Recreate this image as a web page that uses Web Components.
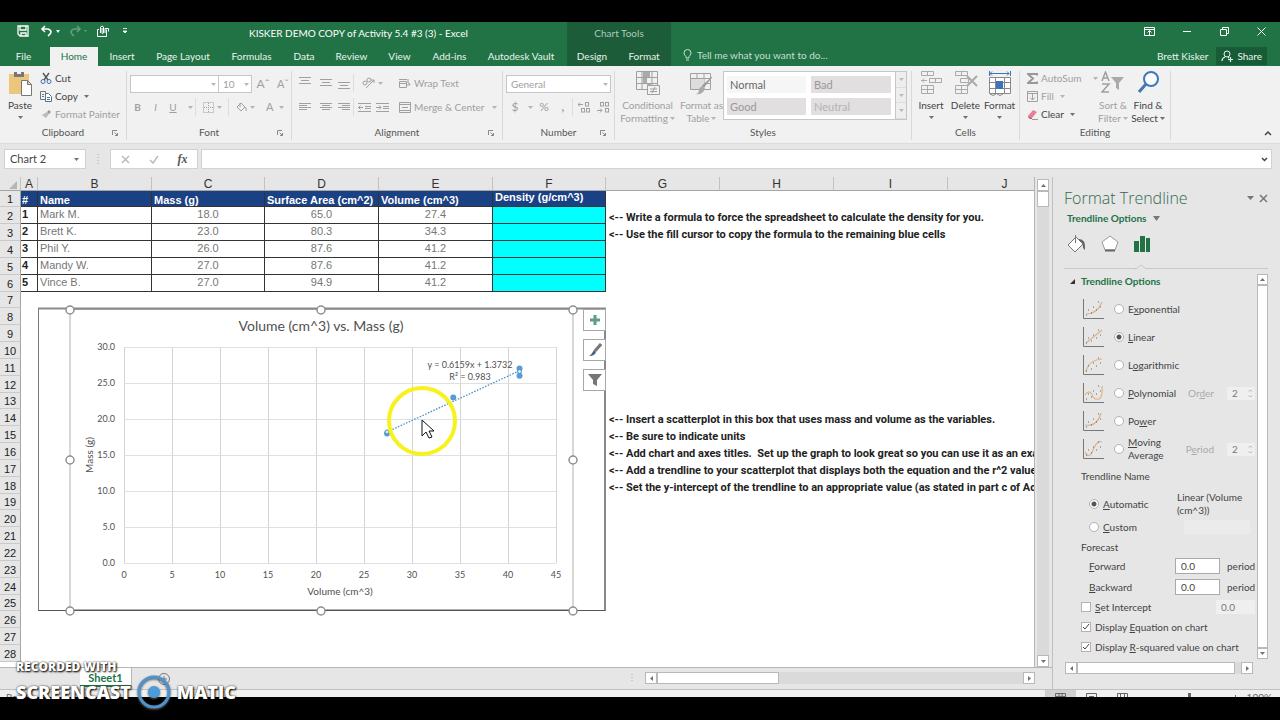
<!DOCTYPE html>
<html lang="en">
<head>
<meta charset="utf-8">
<title>KISKER DEMO COPY of Activity 5.4 #3 (3) - Excel</title>
<style>
html,body{margin:0;background:#000}
body{font:10px/14px Lato,"Open Sans",sans-serif;color:#444}
</style>
</head>
<body>
<xl-app></xl-app>
<script>
const BASE = `<style>
*{box-sizing:border-box}
:host{display:block;box-sizing:border-box}
button,input,select{font:inherit;color:inherit;background:none;border:0;border-radius:0;padding:0;margin:0}
button{white-space:nowrap;cursor:pointer}
a{color:inherit;text-decoration:none}
svg{display:block;flex:none}
</style>`;
function define(name, html, setup){
  const t = document.createElement('template');
  t.innerHTML = BASE + html;
  customElements.define(name, class extends HTMLElement{
    constructor(){
      super();
      this.attachShadow({mode:'open'});
    }
    connectedCallback(){
      if(this.shadowRoot.childNodes.length) return;
      this.shadowRoot.append(t.content.cloneNode(true));
      if(setup) setup(this, this.shadowRoot);
    }
  });
}
const icon = (w,h,body,extra='') => `<svg width="${w}" height="${h}" viewBox="0 0 ${w} ${h}" fill="none" stroke="currentColor" aria-hidden="true" ${extra}>${body}</svg>`;
const arrow = icon(5,3,'<path d="M0 0h5L2.500 3z" fill="currentColor" stroke="none" opacity=".75"/>','class="ar"');

/* ---------- title bar ---------- */
define('xl-title-bar', `<style>
:host{background:#217346;color:#fff;height:22px}
.bar{display:grid;grid-template-columns:1fr 1fr;height:22px;position:relative}
.quick{display:flex;align-items:center;padding-left:17px;gap:9px;height:18px}
.quick .more{margin-left:3px}
.win{display:flex;justify-content:flex-end;align-items:center;gap:28px;padding-right:14px;height:18px}
.name{position:absolute;left:249px;top:4px;white-space:nowrap}
.tools{position:absolute;left:567px;top:0;width:104px;height:22px;background:#1c5c38;color:#a9cdb8;text-align:center;line-height:22px}
.dim{opacity:.3}
button{display:block}
</style>
<div class="bar">
 <div class="quick">
  <button aria-label="Save">${icon(12,12,'<path d="M1 1h10v10H3L1 9zM3 1v4h6V1M4 11V8h5v3" stroke-width="1.300"/>')}</button>
  <button aria-label="Undo" style="margin-left:2px">${icon(20,12,'<path d="M5 1L2 4l3 3M2 4h6q3 1 3 3t-3 4" stroke-width="1.600"/><path d="M16 5h4l-2 3z" fill="#fff" stroke="none"/>')}</button>
  <button class="dim" aria-label="Redo">${icon(18,12,'<path d="M8 1l3 3-3 3M11 4H5Q2 5 2 7t3 4" stroke-width="1.600"/><path d="M15 5h3l-1.500 2z" fill="#fff" stroke="none"/>')}</button>
  <button aria-label="Touch mode">${icon(14,13,'<path d="M3 4.500H1.500v7h9v-7M4.500 8V2q1.500-2 3 0v6q-1 1.500-1.500 0V3M9 3.500h3.500v3M9 3.500V8"/>')}</button>
  <button class="more" aria-label="Customize">${icon(6,6,'<path d="M1 .500h4M1 3h4L3 5z" fill="#fff" stroke-width=".8"/>')}</button>
 </div>
 <div class="win">
  <button aria-label="Ribbon options">${icon(11,9,'<path d="M.500 .500h10v8H.500zM.500 2.500h10M5.500 8V4M3.500 5.500l2-2 2 2"/>')}</button>
  <button aria-label="Minimize">${icon(9,9,'<path d="M0 4.500h8"/>')}</button>
  <button aria-label="Restore">${icon(9,9,'<path d="M.500 2.500h6v6h-6zM2.500 2V.500h6v6H7"/>')}</button>
  <button aria-label="Close">${icon(9,9,'<path d="M.500 .500l8 8M8.500 .500l-8 8"/>')}</button>
 </div>
 <div class="tools">Chart Tools</div>
 <div class="name">KISKER DEMO COPY of Activity 5.4 #3 (3) - Excel</div>
</div>`);

/* ---------- ribbon tabs ---------- */
define('xl-tabs', `<style>
:host{background:#217346;color:#e9f3ed}
nav{display:flex;height:22px;align-items:stretch;white-space:nowrap}
a{display:block;text-align:center;line-height:24px}
.home{background:#f1f1f1;color:#217346;margin-top:3px;line-height:18px}
.ctx{background:#1c5c38}
.tell{display:flex;align-items:center;gap:5px;padding-left:12px;flex:1;color:#c5dfd0}
.user{line-height:24px;padding-right:8px}
.share{display:flex;align-items:center;gap:4px;background:#185c37;height:18px;margin:3px 13px 0 0;padding:0 5px}
</style>
<nav>
 <a href="#" style="width:50px;padding-right:3px">File</a><a href="#" class="home" style="width:48px">Home</a><a href="#" style="width:48px">Insert</a><a href="#" style="width:74px">Page Layout</a><a href="#" style="width:63px">Formulas</a><a href="#" style="width:42px">Data</a><a href="#" style="width:53px">Review</a><a href="#" style="width:43px">View</a><a href="#" style="width:57px">Add-ins</a><a href="#" style="width:89px;padding-right:3px">Autodesk Vault</a><a href="#" class="ctx" style="width:50px">Design</a><a href="#" class="ctx" style="width:54px">Format</a>
 <span class="tell">${icon(9,12,'<path d="M3 9V7.500Q1 6 1 4a3.500 3.500 0 0 1 7 0q0 2-2 3.500V9zM3 11h3"/>')}Tell me what you want to do...</span>
 <span class="user">Brett Kisker</span>
 <button class="share">${icon(12,12,'<circle cx="6" cy="4" r="3"/><path d="M4 7Q1 8 1 11M7 7l1 1M9.500 7v5M7 9.500h5" stroke-width="1.200"/>')}Share</button>
</nav>`);

/* ---------- ribbon ---------- */
define('ribbon-group', `<style>
:host{display:flex;flex-direction:column;border-right:1px solid #d9d9d9;margin:5px 0 4px;height:69px}
.body{height:54px;display:flex;flex:none}
.foot{display:grid;grid-template-columns:14px 1fr 14px;align-items:center;text-align:center;line-height:15px;height:15px;color:#555;white-space:nowrap}
.foot button{color:#888}
</style>
<div class="body"><slot></slot></div>
<div class="foot"><span></span><span class="t"></span><button aria-label="More options">${icon(6,6,'<path d="M.500 5V.500H5M2.500 2.500l3 3M5.500 3v2.500H3"/>')}</button></div>`,
(el,root)=>{
  root.querySelector('.t').textContent = el.getAttribute('label');
  if(!el.hasAttribute('more')) root.querySelector('.foot button').style.visibility='hidden';
});

const lines = (a)=>icon(12,9,a.map((r,i)=>`<path d="M${r[0]} ${i*(a.length>3?2:3)+.5}h${r[1]}"/>`).join(''));
define('xl-ribbon', `<style>
:host{background:#f1f1f1;border-bottom:1px solid #dcdcdc;overflow:hidden}
.row{display:flex;position:relative;height:77px;width:100%}
.col{display:flex;flex-direction:column}
.line{display:flex;align-items:center;height:24px}
.sm{margin-top:-2px}
.sm .line{height:18px}
.sm button{display:flex;align-items:center;gap:3px}
.off{color:#a0a0a0}
.big{display:flex;flex-direction:column;align-items:center;line-height:13px}
.big .pic{height:28px;display:flex;align-items:flex-start;justify-content:center;flex:none}
.big .ar{margin-top:4px}
.big b{font-weight:400;display:flex;align-items:center;gap:2px}
.big b .ar{margin-top:0}
.sel{display:grid;background:#fff;border:1px solid #c6c6c6;height:18px}
.sel>*{grid-area:1/1}
.sel select{appearance:none;width:100%;padding-left:4px;line-height:14px}
.sel .ar{justify-self:end;align-self:center;margin-right:2px}
.c{display:flex;align-items:center;justify-content:center}
.c .ar,.sm .ar{margin-left:3px}
.vr{width:1px;height:18px;background:#ddd}
.gal{display:grid;grid-template-columns:79px 80px;gap:5px;background:#fff;border:1px solid #c6c6c6;padding:4px 4px 4px 3px;height:49px;flex:none}
.gal button{text-align:left;padding-left:3px;background:#e1dfdf;color:#999;font-size:11px}
.gal .n{background:#f6f6f6;color:#666}
.scr{display:flex;flex-direction:column;width:11px;border:1px solid #c6c6c6;border-left:0;height:49px}
.scr button{flex:1;border-bottom:1px solid #ddd;background:#eee;display:flex;align-items:center;justify-content:center;color:#aaa}
.up{position:absolute;right:8px;bottom:7px}
</style>
<div class="row">
<ribbon-group label="Clipboard" more style="width:127px">
 <button class="big" style="width:40px">
  <span class="pic">${icon(24,25,'<path d="M1 3h20v20H1z" fill="#ebc67c" stroke="none"/><path d="M6 1h10v5H6z" fill="#777" stroke="none"/><path d="M9 1h4v2H9z" fill="#f1f1f1" stroke="none"/><path d="M13.500 9.500h6l4 4v11h-10zM19.500 9.500v4h4" fill="#fff" stroke="#777"/>')}</span><span>Paste</span>${arrow}</button>
 <div class="col sm">
  <div class="line"><button>${icon(12,12,'<path d="M3 1l5 7M9 1L4 8" stroke="#555" stroke-width="1.400"/><circle cx="3" cy="9.500" r="2" stroke="#3f6fae"/><circle cx="9" cy="9.500" r="2" stroke="#3f6fae"/>')}<span>Cut</span></button></div>
  <div class="line"><button>${icon(12,11,'<path d="M.500 .500h5v8h-5zM2 3.500h2M2 5.500h2" stroke="#777"/><path d="M5.500 2.500h3l3 3v5h-6zM7 6.500h3M7 8.500h3" fill="#fff" stroke="#56708f"/>')}<span>Copy</span>${arrow}</button></div>
  <div class="line off"><button style="padding-left:1px">${icon(11,10,'<path d="M1 6l5-3 2 2-3 4z" fill="#bbb" stroke="none"/><path d="M6 3l2-2 2 2-2 2" fill="#999" stroke="none"/>')}<span>Format Painter</span></button></div>
 </div>
</ribbon-group>
<ribbon-group label="Font" more style="width:165px">
 <div class="col off">
  <div class="line" style="padding:2px 0 0 3px">
   <span class="sel" style="width:89px"><select aria-label="Font"><option></option></select>${arrow}</span>
   <span class="sel" style="width:34px;margin-left:-1px"><select aria-label="Size"><option>10</option></select>${arrow}</span>
   <button style="width:22px;font-size:12px">A&#710;</button><button style="width:18px;font-size:11px">A&#711;</button>
  </div>
  <div class="line">
   <button style="width:21px"><b>B</b></button><button style="width:15px"><i>I</i></button><button style="width:20px"><u>U</u></button>
   <button class="c" style="width:12px">${arrow}</button><span class="vr"></span>
   <button class="c" style="width:32px">${icon(11,11,'<path d="M.500 .500h10v10H.500zM5.500 1v9M1 5.500h9" stroke-dasharray="1 1"/>')}${arrow}</button><span class="vr"></span>
   <button class="c" style="width:32px">${icon(12,11,'<path d="M2 5l4-4 4 4-4 4zM5 1v4M10 5q2 2 1 4"/>')}${arrow}</button>
   <button class="c" style="width:28px"><span style="font-size:11px">A</span>&nbsp;${arrow}</button>
  </div>
 </div>
</ribbon-group>
<ribbon-group label="Alignment" more style="width:211px">
 <div class="col off">
  <div class="line">
   <button class="c" style="width:25px;padding-bottom:4px">${lines([[0,12],[2,8],[0,12]])}</button><button class="c" style="width:18px">${lines([[0,12],[2,8],[0,12]])}</button><button class="c" style="width:18px;padding-top:6px">${lines([[0,12],[2,8],[0,12]])}</button><span class="vr"></span>
   <button class="c" style="width:37px">${icon(13,12,'<circle cx="3" cy="6" r="2"/><circle cx="7" cy="3" r="2"/><path d="M4 11l8-8M9 3h3v3"/>')}${arrow}</button>
   <button class="c" style="margin-left:8px;gap:3px">${icon(12,11,'<path d="M0 1.500h8M0 5.500h8M.500 3.500h7v6h-7zM9 1v4q2 0 2 2H8"/>')}<span>Wrap Text</span></button>
  </div>
  <div class="line">
   <button class="c" style="width:25px">${lines([[0,12],[0,8],[0,12],[0,8]])}</button><button class="c" style="width:18px">${lines([[0,12],[2,8],[0,12],[2,8]])}</button><button class="c" style="width:18px">${lines([[0,12],[4,8],[0,12],[4,8]])}</button><span class="vr"></span>
   <button class="c" style="width:20px">${icon(13,9,'<path d="M0 .500h13M7 3.500h6M7 5.500h6M0 8.500h13M5 4.500H0M2.500 2.500l-2 2 2 2"/>')}</button><button class="c" style="width:17px">${icon(13,9,'<path d="M0 .500h13M7 3.500h6M7 5.500h6M0 8.500h13M0 4.500h5M3 2.500l2 2-2 2"/>')}</button>
   <button class="c" style="margin-left:8px;gap:3px">${icon(12,11,'<path d="M.500 .500h11v10H.500zM1 2.500h10M1 8.500h10M3 5.500h6"/>')}<span>Merge &amp; Center</span></button><button class="c" style="margin-left:5px">${arrow}</button>
  </div>
 </div>
</ribbon-group>
<ribbon-group label="Number" more style="width:112px">
 <div class="col off">
  <div class="line" style="padding:2px 0 0 3px"><span class="sel" style="width:105px"><select aria-label="Number format"><option>General</option></select>${arrow}</span></div>
  <div class="line">
   <button style="width:24px;font-size:12px">$</button><button class="c" style="width:4px">${arrow}</button><button style="width:26px;font-size:12px">%</button><button style="width:12px;font-size:12px"><b>,</b></button><span class="vr" style="margin-left:3px"></span>
   <button class="c" style="width:22px">${icon(12,11,'<path d="M0 2.500h5M2 .500l-2 2 2 2"/><rect x="7.500" y=".5" width="3" height="3.500"/><rect x="3.500" y="6.500" width="3" height="3.500"/><rect x="8.500" y="6.500" width="3" height="3.500"/>')}</button>
   <button class="c" style="width:15px">${icon(12,11,'<rect x="3.500" y=".5" width="3" height="3.500"/><rect x="8.500" y=".5" width="3" height="3.500"/><path d="M0 8.500h5M3 6.500l2 2-2 2"/><rect x="8.500" y="6.500" width="3" height="3.500"/>')}</button>
  </div>
 </div>
</ribbon-group>
<ribbon-group label="Styles" style="width:297px">
 <button class="big off" style="width:65px">
  <span class="pic">${icon(24,24,'<path d="M.500 .500h21v18H.500zM6 1v18M16 1v18M1 6.500h21M1 12.500h21"/><path d="M7 1h7v5H7zM7 7h4v5H7zM11 13h4v6h-4z" fill="#aaa" stroke="none"/><path d="M11.500 14.500h12v9h-12z" fill="#f1f1f1"/><path d="M14 18h7M14 20.500h7M19 16l-3 6"/>')}</span><span>Conditional</span><b>Formatting ${arrow}</b></button>
 <button class="big off" style="width:43px">
  <span class="pic">${icon(24,24,'<path d="M.500 2.500h20v16H.500zM7 3v15M14 3v15M1 7.500h19M1 12.500h19"/><path d="M1 8h13v10H1z" fill="#ddd" stroke="none"/><path d="M22 6l-8 10-2-1z" fill="#999"/><path d="M13 15q3 3 0 6-3 3-7 2 3-1 3-4t4-4z" fill="#aaa" stroke="none"/>')}</span><span>Format as</span><b>Table ${arrow}</b></button>
 <div class="gal"><button class="n">Normal</button><button>Bad</button><button>Good</button><button style="color:#b4b4b4">Neutral</button></div>
 <div class="scr"><button aria-label="Up">${arrow}</button><button aria-label="Down">${arrow}</button><button aria-label="All styles">${arrow}</button></div>
</ribbon-group>
<ribbon-group label="Cells" style="width:108px">
 <button class="big" style="width:38px"><span class="pic">${icon(22,23,'<path d="M1.500 .500h12v4h-12zM7.500 .500v4M9.500 7.500h12v4h-12zM15.500 7.500v4M7 9.500H1M4 7.500l-2 2 2 2M1.500 14.500h12v8h-12zM7.500 14.500v8M1.500 18.500h12" stroke="#aaa"/>')}</span><span>Insert</span>${arrow}</button>
 <button class="big" style="width:31px"><span class="pic">${icon(24,23,'<path d="M1.500 .500h12v4h-12zM7.500 .500v4M6.500 7.500h8v4h-8zM1.500 14.500h12v8h-12zM7.500 14.500v8M1.500 18.500h12" stroke="#aaa"/><path d="M13 5l10 10M23 5L13 15" stroke="#aaa" stroke-width="2"/>')}</span><span>Delete</span>${arrow}</button>
 <button class="big" style="width:37px"><span class="pic">${icon(24,25,'<path d="M1.500 6.500h21v16h-21zM7.500 6.500v16M16.500 6.500v16M1.500 11.500h21M1.500 17.500h21" fill="#fff" stroke="#888"/><path d="M8 10h7v8H8z" fill="#3f74b8" stroke="none"/><path d="M2 2.500h19M4 .500l-2 2 2 2M19 .500l2 2-2 2M1.500 0v5M22.500 0v5" stroke="#3f74b8"/><path d="M2 23q3 3 6 0M9 23q3 3 6 0" stroke="#888"/>')}</span><span>Format</span>${arrow}</button>
</ribbon-group>
<ribbon-group label="Editing" style="width:151px">
 <div class="col sm" style="width:74px;padding-left:7px">
  <div class="line off"><button>${icon(11,11,'<path d="M10 2.500V1H1l5 4.500L1 10h9V8.500" stroke-width="2" stroke="#999"/>')}<span>AutoSum</span>&nbsp;${arrow}</button></div>
  <div class="line off"><button>${icon(11,11,'<path d="M.500 .500h10v10H.500zM1 2.500h9M5.500 3v6M3 6.500l2.500 2.500L8 6.500"/>')}<span>Fill</span>${arrow}</button></div>
  <div class="line"><button>${icon(11,11,'<path d="M1 7l5-6 4 2-5 6z" fill="#e67f98" stroke="none"/><path d="M1 7l4 2v1H3L1 8z" fill="#c9506e" stroke="none"/><path d="M5 10.500h6" stroke="#999"/>')}<span>Clear</span>${arrow}</button></div>
 </div>
 <button class="big off" style="width:38px"><span class="pic">${icon(24,23,'<path d="M1 10L4.500 1 8 10M2 7h5M1 13h7L1 21h7" stroke-width="1.500"/><path d="M10 6h13l-5 6v7l-3-2v-5z" fill="#aaa" stroke="none"/>')}</span><span>Sort &amp;</span><b>Filter ${arrow}</b></button>
 <button class="big" style="width:32px"><span class="pic">${icon(23,23,'<circle cx="14" cy="8" r="7" fill="#f7fbff" stroke="#3f78b5" stroke-width="2"/><path d="M9 13l-7 8" stroke="#3f78b5" stroke-width="3"/>')}</span><span>Find &amp;</span><b>Select ${arrow}</b></button>
</ribbon-group>
<button class="up" aria-label="Collapse ribbon">${icon(8,6,'<path d="M1 5l3-3 3 3" stroke-width="1.500"/>')}</button>
</div>`);

/* ---------- formula bar ---------- */
define('xl-formula-bar', `<style>
:host{display:flex;padding:5px 8px 8px 4px;background:#e6e6e6}
.box{background:#fff;border:1px solid #d2d2d2;height:20px;display:flex;align-items:center}
.name{width:82px}
.name input{width:69px;padding-left:5px;font-size:11px}
.dots{width:24px;display:flex;align-items:center;justify-content:center;color:#aaa}
.fx{width:88px;margin-right:3px;justify-content:space-around;color:#bbb}
.fx i{font:italic bold 12px "Liberation Serif",serif;color:#555}
.val{flex:1;min-width:0;padding-right:3px}
.val input{flex:1;min-width:0}
</style>
<div class="box name"><input aria-label="Name box" value="Chart 2">${arrow}</div>
<div class="dots">${icon(2,10,'<path d="M1 0v10" stroke-dasharray="1 2"/>')}</div>
<div class="box fx"><button aria-label="Cancel">${icon(9,9,'<path d="M1 1l7 7M8 1L1 8" stroke-width="1.500"/>')}</button><button aria-label="Enter">${icon(10,9,'<path d="M1 5l3 3 5-7" stroke-width="1.500"/>')}</button><button aria-label="Insert function"><i>fx</i></button></div>
<div class="box val"><input aria-label="Formula"><button aria-label="Expand">${icon(7,5,'<path d="M1 1l2.500 2.500L6 1" stroke-width="1.500"/>')}</button></div>`);

/* ---------- scroll bar ---------- */
define('scroll-bar', `<style>
:host{display:flex;background:#dadada;--s:12px}
button{width:var(--s);height:var(--s);background:#fff;border:1px solid #b9b9b9;display:flex;align-items:center;justify-content:center;flex:none;color:#444}
.track{flex:1;display:flex}
.thumb{background:#fff;border:1px solid #b9b9b9}
:host([vertical]) , :host([vertical]) .track{flex-direction:column}
:host([vertical]) button:first-of-type svg{transform:rotate(180deg)}
:host(:not([vertical])) button:first-of-type svg{transform:rotate(90deg)}
:host(:not([vertical])) button:last-of-type svg{transform:rotate(-90deg)}
</style><button aria-label="Back">${arrow}</button><div class="track"><div class="thumb"></div></div><button aria-label="Forward">${arrow}</button>`,
(el,root)=>{ root.querySelector('.thumb').style.flex='0 1 '+el.getAttribute('thumb'); });

/* ---------- chart ---------- */
define('xl-chart', `<style>
:host{display:flex;gap:9px;padding-left:24px;font-family:Lato,"Open Sans",sans-serif}
.tools{display:flex;flex-direction:column;gap:8px;padding-top:1px}
.tools button{width:23px;height:22px;border:1px solid #a8a8a8;background:#fff;display:flex;align-items:center;justify-content:center;margin-left:-2px}
svg text{fill:#505050;stroke:none;font-size:9px}
svg .axis{font-size:10px}
svg .title{font-size:14px}
</style>
<svg class="plot" width="513" height="302" viewBox="-6 0 513 302" fill="none" role="img" aria-label="Volume vs. Mass scatter chart" style="overflow:visible"></svg>
<div class="tools">
<button aria-label="Chart elements">${icon(12,12,'<path d="M6 1v10M1 6h10" stroke="#5f9c84" stroke-width="3"/>')}</button>
<button aria-label="Chart styles">${icon(14,14,'<path d="M13 1L7 8" stroke="#777" stroke-width="3"/><path d="M6 7l2 2q-1 4-7 4 3-2 5-6z" fill="#47618e" stroke="none"/>')}</button>
<button aria-label="Chart filters">${icon(14,14,'<path d="M0 1h14L9 7v6l-4-2V7z" fill="#777" stroke="none"/>')}</button>
</div>`,
(el,root)=>{
  const L=55,T=39,W=432,H=216,px=v=>L+v*9.6,py=v=>T+H-v*7.2;
  let s='';
  for(let i=0;i<=9;i++) s+=`<path d="M${L+i*48+.5} ${T}v${H}" stroke="#d4d4d4"/><text x="${L+i*48}" y="270" text-anchor="middle">${i*5}</text>`;
  for(let i=0;i<=6;i++) s+=`<path d="M${L} ${T+i*36+.5}h${W}" stroke="#e0e0e0"/><text x="${L-9}" y="${T+i*36+3}" text-anchor="end">${(30-i*5).toFixed(1)}</text>`;
  s+=`<path d="M${px(27.4)} ${py(18.2)}L${px(41.2)} ${py(26.700)}" stroke="#4a8cc0" stroke-width="1.300" stroke-dasharray="1.500 1.500"/>`;
  for(const [x,y] of [[27.4,18],[34.3,23],[41.2,26],[41.2,27]]) s+=`<circle cx="${px(x)}" cy="${py(y)}" r="3" fill="#5b9bd5" stroke="none"/>`;
  for(const [x,y] of [[27.4,18.2],[41.2,26.600]]) s+=`<circle cx="${px(x)}" cy="${py(y)}" r="2" fill="#d8eefc" stroke="#4a8cc0"/>`;
  s+=`<text class="title" x="252" y="23" text-anchor="middle">Volume (cm^3) vs. Mass (g)</text>
  <text class="axis" x="271" y="287" text-anchor="middle">Volume (cm^3)</text>
  <text class="axis" transform="translate(24 147) rotate(-90)" text-anchor="middle">Mass (g)</text>
  <text x="401" y="60" text-anchor="middle">y = 0.6159x + 1.3732</text><text x="401" y="72" text-anchor="middle">R² = 0.983</text>
  <path d="M1 1.500h503v300H1z" stroke="#b0b0b0"/><path d="M-31 .500H537" stroke="#8a8a8a" stroke-width="2"/>`;
  for(const x of [1,252,504]) for(const y of [2,152,303]) if(x!==252||y!==152) s+=`<circle cx="${x}" cy="${y}" r="4" fill="#fff" stroke="#8f8f8f" stroke-width="1.500"/>`;
  root.querySelector('.plot').innerHTML=s;
});

/* ---------- worksheet ---------- */
define('xl-sheet', `<style>
:host{flex:1;min-width:0;display:flex;background:#e6e6e6}
.view{flex:1;min-width:0;overflow:hidden;position:relative;background:#fff;border-right:1px solid #b5b5b5;contain:inline-size}
scroll-bar{margin:2px 3px 0 2px;width:12px}
table{border-collapse:separate;border-spacing:0;table-layout:fixed;width:1062px;font:11px/14px "Liberation Sans",Arial,sans-serif;color:#222}
th,td{padding:0;overflow:visible;white-space:nowrap;text-align:left}
thead th{height:14px;background:#e6e6e6;border-right:1px solid #c2c2c2;border-bottom:1px solid #a5a5a5;font-weight:400;text-align:center;font-size:12px;line-height:11px;padding-top:2px;color:#333}
tbody th{height:17px;background:#e6e6e6;border-right:1px solid #a5a5a5;border-bottom:1px solid #c9c9c9;font-weight:400;text-align:center;vertical-align:bottom;line-height:13px}
tbody tr:nth-child(6n+1) th{height:16px}
td.d{border-right:1px solid #333;border-bottom:1px solid #333;vertical-align:top;line-height:15px;padding-left:2px;color:#777}
td.n{text-align:center;padding:0}
td.k{font-weight:700;color:#222;padding-left:1px}
tr.h td.d{background:#1b4185;color:#fff;font-weight:700;vertical-align:bottom;line-height:12px}
tr.h td.f{vertical-align:top}
td.f{background:#0ff}
td.note{font-family:Roboto,"Liberation Sans",sans-serif;font-weight:700;vertical-align:bottom;padding-left:3px;line-height:13px}
td.box{border:1px solid #555;border-top:0;border-right:2px solid #888;border-left:1px solid #777;vertical-align:top}
.corner{display:flex;justify-content:flex-end;padding-right:3px;color:#b5b5b5}
</style>
<div class="view"><table>
<colgroup><col style="width:21px"><col style="width:17px"><col style="width:114px"><col style="width:113px"><col style="width:114px"><col style="width:114px"><col style="width:113px"><col style="width:114px"><col style="width:114px"><col style="width:114px"><col style="width:114px"></colgroup>
<thead><tr><th><span class="corner">${icon(8,8,'<path d="M8 0v8H0z" fill="currentColor" stroke="none"/>')}</span></th></tr></thead><tbody></tbody></table></div>
<scroll-bar vertical thumb="16px"></scroll-bar>`,
(el,root)=>{
  for(const c of 'ABCDEFGHIJ') root.querySelector('thead tr').insertAdjacentHTML('beforeend',`<th scope="col">${c}</th>`);
  const rows=[['#','Name','Mass (g)','Surface Area (cm^2)','Volume (cm^3)','Density (g/cm^3)'],
   ['1','Mark M.','18.0','65.0','27.4',''],['2','Brett K.','23.0','80.3','34.3',''],['3','Phil Y.','26.0','87.6','41.2',''],['4','Mandy W.','27.0','87.6','41.2',''],['5','Vince B.','27.0','94.9','41.2','']];
  const notes={2:'Write a formula to force the spreadsheet to calculate the density for you.',3:'Use the fill cursor to copy the formula to the remaining blue cells',
   14:'Insert a scatterplot in this box that uses mass and volume as the variables.',15:'Be sure to indicate units',16:'Add chart and axes titles.&nbsp; Set up the graph to look great so you can use it as an example',
   17:'Add a trendline to your scatterplot that displays both the equation and the r^2 value',18:'Set the y-intercept of the trendline to an appropriate value (as stated in part c of Activity)'};
  let h='';
  for(let r=1;r<=28;r++){
    h+=`<tr${r===1?' class="h"':''}><th scope="row">${r}</th>`;
    if(rows[r-1]) h+=rows[r-1].map((t,i)=>`<td class="d${i===0?' k':''}${i===5?' f':''}${r>1&&i>1?' n':''}">${t}</td>`).join('');
    else if(r===8) h+='<td></td><td class="box" colspan="5" rowspan="18"><xl-chart></xl-chart></td>';
    else if(r>8&&r<26) h+='<td></td>';
    else h+='<td colspan="6"></td>';
    h+=`<td class="note" colspan="4">${notes[r]?'&lt;-- '+notes[r]:''}</td></tr>`;
  }
  root.querySelector('tbody').innerHTML=h;
});

/* ---------- sheet tabs ---------- */
define('sheet-tabs', `<style>
:host{display:flex;height:22px;background:#e6e6e6;border-top:1px solid #b5b5b5;padding-right:17px}
.tab{margin-left:80px;width:52px;height:19px;background:#fff;color:#217346;font-weight:700;font-size:11px;line-height:19px;border-right:1px solid #b5b5b5;border-bottom:2px solid #217346;text-align:center}
.add{margin:0 0 0 26px;color:#777}
.dots{margin-left:auto;display:flex;align-items:center;color:#aaa;margin-right:12px}
scroll-bar{width:390px;height:12px;margin-top:4px}
</style><a href="#" class="tab">Sheet1</a><button class="add" aria-label="New sheet">${icon(12,12,'<circle cx="6" cy="6" r="5.500"/><path d="M6 3v6M3 6h6"/>')}</button>
<span class="dots">${icon(2,9,'<path d="M1 0v9" stroke-dasharray="1 2"/>')}</span><scroll-bar thumb="122px"></scroll-bar>`);

/* ---------- format pane ---------- */
const curves={exp:'M3 15Q14 15 19 3',lin:'M3 16L19 3',log:'M3 17Q5 5 19 4',poly:'M2 12Q7 5 10 14q2 3 6 2 4-2 3-13',pow:'M2 14Q14 16 18 2',mov:'M2 13q4 8 8-2T19 3'};
define('trend-option', `<style>
:host{display:grid;grid-template-columns:21px 20px 60px 1fr;align-items:center;height:28px;padding-left:19px}
.r{appearance:none;width:10px;height:10px;border:1px solid #b2b2b2;border-radius:5px;background:#fff;margin-left:10px}
.r:checked{background:radial-gradient(#555 0 2px,#fff 3px)}
label{padding-left:4px;line-height:13px}
.x{display:flex;align-items:center;color:#aaa;justify-content:flex-end}
.x input{width:28px;height:13px;background:#efefef;padding-left:5px;color:#777;margin-left:13px}
.spin{color:#aaa;margin-left:-7px;width:7px}
</style><span class="ic"></span><input class="r" type="radio" name="t" id="r"><label for="r"><slot></slot></label><span class="x"></span>`,
(el,root)=>{
  const c=el.getAttribute('curve');
  root.querySelector('.ic').innerHTML=icon(21,20,`<path d="M.500 0v19.500H21" stroke="#777"/><path d="${curves[c]}" stroke="#dfb389" stroke-width="1.200"/><path d="M5 11h1M8 14h1M10 8h1M13 11h1M15 3h1M17 8h1M3 16h1" stroke="#666"/>`);
  root.querySelector('.r').checked=el.hasAttribute('on');
  const x=el.getAttribute('extra');
  if(x) root.querySelector('.x').innerHTML=`<label for="n" style="padding:0">${x}</label><input id="n" value="2"><span class="spin">${icon(5,9,'<path d="M1 2.500l1.500-1.500L4 2.500M1 6.500l1.500 1.500L4 6.500"/>')}</span>`;
});
define('format-pane', `<style>
:host{width:228px;background:#e6e6e6;border-left:1px solid #c0c0c0;padding:10px 12px 0 11px;display:flex;flex-direction:column}
h2{font:300 16px/22px "Open Sans","Noto Sans",sans-serif;color:#33694c;margin:0;flex:1}
.head{display:flex;align-items:center;gap:5px}
.sub{font-weight:700;color:#217346;display:flex;gap:6px;align-items:center;padding-left:3px;line-height:18px}
.tabs{display:flex;align-items:flex-start;gap:14px;padding:7px 0 0 3px;height:41px}
.rule{border-top:1px solid #c9c9c9;display:flex;height:6px}
.rule svg{margin:-5px 0 0 71px}
.main{display:flex}
.body{flex:1;min-width:0;overflow:hidden}
h3{font:inherit;font-weight:700;color:#217346;margin:0;display:flex;gap:6px;align-items:center;padding-left:6px}
.opts{padding-top:7px}
.sec{padding-left:17px;line-height:14px}
.ln{display:flex;align-items:center;height:21px;padding-left:17px;white-space:nowrap}
.ck-row{height:20px}
input[type=radio]{appearance:none;width:10px;height:10px;border:1px solid #b2b2b2;border-radius:5px;background:#fff;margin:0 4px 0 8px;flex:none}
input[type=radio]:checked{background:radial-gradient(#555 0 2px,#fff 3px)}
.ck{display:grid;margin-right:4px}.ck>*{grid-area:1/1;place-self:center}
input[type=checkbox]{appearance:none;width:10px;height:10px;border:1px solid #b2b2b2;background:#fff}
.num{width:45px;height:16px;border:1px solid #aaa;background:#fff;padding-left:5px;margin-right:7px;flex:none}
.lab{width:78px;margin:0 8px;flex:none}
.v{width:11px;margin-left:2px;--s:11px}
.v,.hs{background:#dadada}
.hs{margin:3px 15px 0 1px;height:12px}
</style>
<div class="head"><h2>Format Trendline</h2><button aria-label="Options">${icon(7,4,'<path d="M0 0h7L3.500 4z" fill="#777" stroke="none"/>')}</button><button aria-label="Close">${icon(9,9,'<path d="M1 1l7 7M8 1L1 8" stroke-width="1.500" stroke="#777"/>')}</button></div>
<div class="sub">Trendline Options ${icon(7,5,'<path d="M0 0h7L3.500 5z" fill="#777" stroke="none"/>')}</div>
<div class="tabs">
<button aria-label="Fill and line">${icon(20,20,'<path d="M1 11l8-8 7 7-8 8z" fill="#fff" stroke="#777"/><path d="M8.500 1v8" stroke="#777"/><path d="M11 5q8-1 7 11-3-2-2-6z" fill="#666" stroke="none"/>')}</button>
<button aria-label="Effects">${icon(18,20,'<path d="M9 2l8 6-3 8H4L1 8z" fill="#fff" stroke="#999"/><path d="M4 16.500h10" stroke="#666" stroke-width="2"/>')}</button>
<button aria-label="Trendline options">${icon(18,20,'<path d="M1 7h5v11H1zM7 2h5v16H7zM13 4h4v14h-4z" fill="#217346" stroke="none"/>')}</button></div>
<div class="rule">${icon(12,6,'<path d="M0 5.500L6 1l6 4.500" fill="#e6e6e6" stroke="#c9c9c9"/>')}</div>
<div class="main"><div class="body">
<h3>${icon(5,5,'<path d="M5 0v5H0z" fill="#333" stroke="none"/>')} Trendline Options</h3>
<div class="opts">
<trend-option curve="exp">E<u>x</u>ponential</trend-option><trend-option curve="lin" on><u>L</u>inear</trend-option><trend-option curve="log">L<u>o</u>garithmic</trend-option><trend-option curve="poly" extra="Or<u>d</u>er"><u>P</u>olynomial</trend-option><trend-option curve="pow">Po<u>w</u>er</trend-option><trend-option curve="mov" extra="P<u>e</u>riod"><u>M</u>oving<br>Average</trend-option></div>
<div class="sec" style="padding-top:6px">Trendline Name</div>
<div class="ln" style="height:40px;padding-top:2px"><input type="radio" name="nm" id="au" checked><label for="au" style="width:74px"><u>A</u>utomatic</label><span style="line-height:13px">Linear (Volume<br>(cm^3))</span></div>
<div class="ln" style="height:16px;margin-top:-4px"><input type="radio" name="nm" id="cu"><label for="cu" style="width:81px"><u>C</u>ustom</label><input aria-label="Custom name" style="width:66px;height:14px;background:#ebebeb"></div>
<div class="sec" style="padding-top:5px;height:20px">Forecast</div>
<div class="ln"><label class="lab" for="fw"><u>F</u>orward</label><input class="num" id="fw" value="0.0">period</div>
<div class="ln"><label class="lab" for="bw"><u>B</u>ackward</label><input class="num" id="bw" value="0.0">period</div>
<div class="ln ck-row"><span class="ck"><input type="checkbox" id="si"></span><label for="si" style="flex:1"><u>S</u>et Intercept</label><input aria-label="Intercept" value="0.0" style="width:39px;height:14px;background:#efefef;padding-left:5px;color:#777"></div>
<div class="ln ck-row"><span class="ck"><input type="checkbox" id="de" checked>${icon(8,8,'<path d="M1 4l2 2 4-5"/>','style="pointer-events:none"')}</span><label for="de">Display <u>E</u>quation on chart</label></div>
<div class="ln ck-row"><span class="ck"><input type="checkbox" id="dr" checked>${icon(8,8,'<path d="M1 4l2 2 4-5"/>','style="pointer-events:none"')}</span><label for="dr">Display <u>R</u>-squared value on chart</label></div>
</div><scroll-bar class="v" vertical thumb="363px"></scroll-bar></div>
<scroll-bar class="hs" thumb="158px"></scroll-bar>`);

/* ---------- status bar ---------- */
define('status-bar', `<style>
:host{display:flex;height:8px;overflow:hidden;background:#f0f0f0;border-top:1px solid #c0c0c0;padding:0 8px 0 6px;align-items:flex-start;color:#666}
.r{margin-left:auto;display:flex}
.c{display:flex;justify-content:center;padding-top:3px;width:31px}
</style><span>Ready</span><div class="r"><button class="c" style="background:#cfcfcf" aria-label="Normal view">${icon(11,9,'<path d="M.500 .500h10v8H.500zM4 0v9M7 0v9M0 3.500h11"/>')}</button><button class="c" aria-label="Page layout view">${icon(11,9,'<path d="M.500 .500h10v8H.500zM3 3.500h5M3 5.500h5"/>')}</button><button class="c" aria-label="Page break view">${icon(11,9,'<path d="M.500 .500h10v8H.500zM3.500 0v5M7.500 0v5"/>')}</button><span style="width:100px;display:flex;justify-content:space-between;padding:3px 0 0 50px">${icon(3,6,'<path d="M1.500 0v6" stroke-width="3"/>')}${icon(5,8,'<path d="M2.500 2v5M0 4.500h5"/>')}</span><span style="padding-left:9px">100%</span></div>`);

/* ---------- recorder watermark ---------- */
define('recorder-mark', `<style>
:host{color:#fff;font-family:"Open Sans","Noto Sans",sans-serif;font-weight:800;text-shadow:1px 1px 2px #000,0 0 2px #333}
.a{font-size:12px;line-height:14px;padding-bottom:1px}
.b{display:flex;align-items:center;font-size:18px;line-height:34px;height:34px;gap:5px}
svg{filter:drop-shadow(0 1px 1px #555)}
</style><div class="a">RECORDED WITH</div><div class="b"><span>SCREENCAST</span>${icon(36,36,'<circle cx="18" cy="18" r="15" stroke="#4d94cf" stroke-width="3"/><circle cx="18" cy="18" r="6" fill="#4d9bd8" stroke="none"/>')}<span>MATIC</span></div>`);

/* ---------- application ---------- */
define('xl-app', `<style>
:host{position:relative;display:flex;flex-direction:column;min-height:100vh;padding:22px 0 23px}
.work{display:flex;flex:1;background:#e6e6e6}
.left{flex:1;min-width:0;display:flex;flex-direction:column}
format-pane{flex:none}
recorder-mark{position:absolute;left:16px;bottom:11px}
.cursor{position:absolute;left:386px;top:385px;pointer-events:none}
</style>
<xl-title-bar></xl-title-bar><xl-tabs></xl-tabs><xl-ribbon></xl-ribbon><xl-formula-bar></xl-formula-bar>
<div class="work"><div class="left"><xl-sheet></xl-sheet><sheet-tabs></sheet-tabs></div><format-pane></format-pane></div>
<status-bar></status-bar>
<div class="cursor">${icon(72,72,'<circle cx="36" cy="36" r="33" stroke="#f7f11c" stroke-width="4"/><path d="M36 35v16l4-4 3 6 3-1-3-6h5z" fill="#fff" stroke="#111"/>')}</div>
<recorder-mark></recorder-mark>`);
</script>
</body>
</html>
